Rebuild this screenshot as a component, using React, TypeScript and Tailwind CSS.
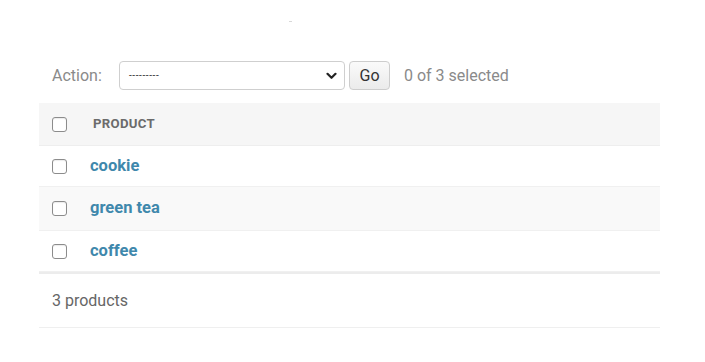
import React from 'react';

const products = ['cookie', 'green tea', 'coffee'];

function Box() {
    return <span className="block w-[15px] h-[15px] rounded-[3px] border border-[#8c8c8c] bg-white shadow-[inset_0_1px_1px_rgba(0,0,0,0.08)]" />;
}

export default function App() {
    return (
        <div className="w-[705px] h-[362px] bg-white font-['Roboto',sans-serif] relative">
            {/* faint speck near the top */}
            <span className="absolute left-[289px] top-[21px] w-[3px] h-[1px] bg-[#d8d8d8]" />

            <div className="pl-[39px] pt-[61px] w-[660px]">
                {/* Action bar */}
                <div className="flex items-center h-[29px] pl-[13px]">
                    <span className="text-[16px] text-[#8a8a8a] w-[67px]">Action:</span>
                    <div className="w-[226px] h-[29px] rounded-[4px] border border-[#cfcfcf] flex items-center justify-between pl-[9px] pr-[7px]">
                        <span className="text-[10px] text-[#333] tracking-[0.6px] leading-none">---------</span>
                        <svg width="11" height="8" viewBox="0 0 11 8" fill="none">
                            <path d="M1.5 1.8 L5.5 5.8 L9.5 1.8" stroke="#222" strokeWidth="2.2" strokeLinecap="round" strokeLinejoin="round" />
                        </svg>
                    </div>
                    <div className="ml-[4px] w-[41px] h-[29px] rounded-[4px] border border-[#cdcdcd] bg-gradient-to-b from-[#fafafa] to-[#ebebeb] flex items-center justify-center text-[16px] text-[#333]">
                        Go
                    </div>
                    <span className="ml-[14px] text-[16px] text-[#8a8a8a]">0 of 3 selected</span>
                </div>

                {/* Table */}
                <div className="mt-[13px]">
                    <div className="flex items-center h-[43px] bg-[#f6f6f6] border-b border-[#eeeeee] pl-[13px]">
                        <Box />
                        <span className="ml-[26px] text-[13.2px] font-bold text-[#6b6b6b] tracking-[0.3px]">PRODUCT</span>
                    </div>
                    {products.map((p, i) => (
                        <div
                            key={p}
                            className={
                                'flex items-center pl-[13px] border-b border-[#f0f0f0] ' +
                                (i === 1 ? 'h-[44px] bg-[#f9f9f9]' : 'h-[41px] bg-white')
                            }
                        >
                            <Box />
                            <span className="ml-[23px] text-[16.5px] font-bold text-[#3f88ac]">{p}</span>
                        </div>
                    ))}
                    <div className="h-[2px] bg-[#ececec]" />
                </div>

                {/* Footer */}
                <div className="h-[54px] flex items-center pl-[13px] border-b border-[#efefef]">
                    <span className="text-[16px] text-[#666]">3 products</span>
                </div>
            </div>
        </div>
    );
}
